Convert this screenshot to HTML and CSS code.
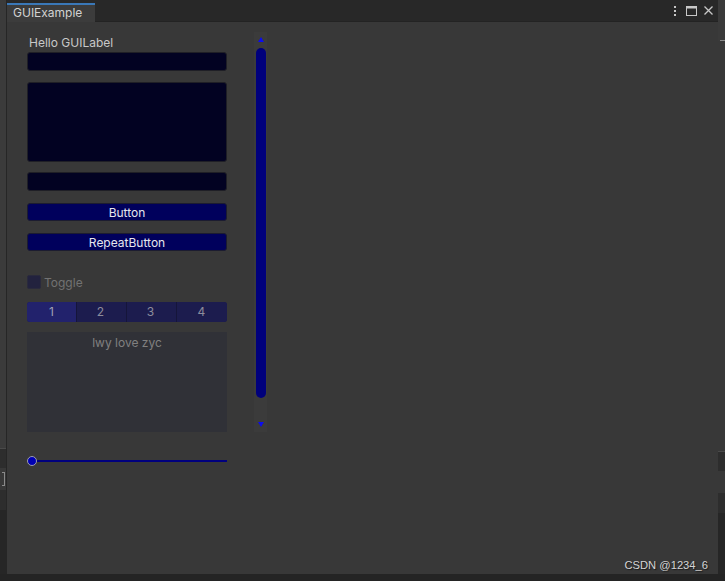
FILE: index.html
```html
<!DOCTYPE html>
<html>
<head>
<meta charset="utf-8">
<link rel="stylesheet" href="styles.css">
</head>
<body>
<div class="screen">
  <div class="side side-left">
    <div class="s-a"></div>
    <div class="s-b"></div>
    <div class="s-c"><span class="br"></span></div>
    <div class="s-b2"></div>
    <div class="s-d"></div>
  </div>
  <div class="window">
    <div class="tabbar">
      <div class="tab">GUIExample</div>
      <div class="tab-icons">
        <svg class="ic" width="6" height="12" viewBox="0 0 6 12"><rect x="2" y="1" width="2" height="2" fill="#c8c8c8"/><rect x="2" y="5" width="2" height="2" fill="#c8c8c8"/><rect x="2" y="9" width="2" height="2" fill="#c8c8c8"/></svg>
        <svg class="ic max" width="11" height="10" viewBox="0 0 11 10"><rect x="0.5" y="0.5" width="10" height="9" fill="none" stroke="#c8c8c8"/><rect x="0.5" y="0.5" width="10" height="2" fill="#c8c8c8"/></svg>
        <svg class="ic" width="9" height="9" viewBox="0 0 9 9"><path d="M0.5 0.5L8.5 8.5M8.5 0.5L0.5 8.5" stroke="#c8c8c8" stroke-width="1.3"/></svg>
      </div>
    </div>
    <div class="content">
      <div class="col">
        <div class="label">Hello GUILabel</div>
        <div class="field"></div>
        <div class="field area"></div>
        <div class="field pass"></div>
        <div class="btn">Button</div>
        <div class="btn rep">RepeatButton</div>
        <div class="toggle"><span class="check"></span><span class="tlabel">Toggle</span></div>
        <div class="toolbar">
          <div class="seg on">1</div>
          <div class="seg">2</div>
          <div class="seg">3</div>
          <div class="seg last">4</div>
        </div>
        <div class="box">lwy love zyc</div>
        <div class="slider"><span class="thumb"></span><span class="track"></span></div>
      </div>
      <div class="vscroll">
        <span class="arrow up"></span>
        <span class="vthumb"></span>
        <span class="arrow down"></span>
      </div>
      <div class="mark">CSDN @1234_6</div>
    </div>
  </div>
  <div class="side side-right">
    <div class="r-a"></div>
    <div class="r-line"></div>
    <div class="r-a2"></div>
    <div class="s-b"></div>
    <div class="s-c"></div>
    <div class="s-b2"></div>
    <div class="s-d"></div>
  </div>
</div>
</body>
</html>
```
FILE: styles.css
```css
html, body {
  margin: 0;
  padding: 0;
}
body {
  width: 725px;
  height: 581px;
  overflow: hidden;
  background: #242424;
  font-family: Inter, "Noto Sans", sans-serif;
  font-size: 12px;
}
.screen {
  display: flex;
  height: 574px;
}
.side {
  width: 6px;
  display: flex;
  flex-direction: column;
  background: #3a3a3a;
}
.side-left {
  border-right: 1px solid #262626;
}
.side-right {
  width: 7px;
}
.s-a { height: 448px; background: #3b3b3b; }
.s-b { height: 20px; background: #2d2d2d; border-top: 1px solid #4a4a4a; box-sizing: border-box; }
.s-c { height: 22px; background: #383838; display: flex; align-items: center; }
.br {
  display: block;
  width: 2px;
  height: 12px;
  margin-left: 2px;
  border: 1px solid #8a8a8a;
  border-left: 0;
}
.s-b2 { height: 20px; background: #2d2d2d; }
.s-d { flex: 1; background: #262626; }
.r-a { height: 40px; background: #3a3a3a; }
.r-line { height: 1px; background: #8a8a8a; margin-left: 2px; }
.r-a2 { height: 410px; background: #383838; }

.window {
  width: 711px;
  display: flex;
  flex-direction: column;
}
.tabbar {
  height: 22px;
  background: #282828;
  display: flex;
  align-items: flex-end;
  border-bottom: 1px solid #232323;
  box-sizing: border-box;
}
.tab {
  width: 88px;
  height: 19px;
  margin-bottom: -1px;
  box-sizing: border-box;
  border-top: 2px solid #3a78b8;
  background: #3c3c3c;
  color: #d2d2d2;
  padding-left: 6px;
  line-height: 16px;
  font-size: 12px;
}
.tab-icons {
  margin-left: auto;
  align-self: stretch;
  display: flex;
  align-items: center;
  padding-right: 5px;
}
.ic { display: block; }
.max { margin: 0 7px 0 8px; }

.content {
  flex: 1;
  background: #383838;
  display: flex;
  align-items: flex-start;
  padding: 10px 0 0 20px;
  position: relative;
}
.col {
  width: 200px;
  display: flex;
  flex-direction: column;
  padding-top: 2px;
}
.label {
  height: 18px;
  line-height: 18px;
  color: #c8c8c8;
  padding-left: 2px;
}
.field {
  height: 19px;
  box-sizing: border-box;
  background: #020222;
  border: 1px solid #1f1f26;
  border-radius: 3px;
}
.area {
  height: 80px;
  margin-top: 11px;
}
.pass {
  margin-top: 10px;
}
.btn {
  height: 18px;
  margin-top: 12px;
  box-sizing: border-box;
  background: #00005c;
  border: 1px solid #1c1c30;
  border-radius: 3px;
  color: #e6e6ee;
  text-align: center;
  line-height: 18px;
}
.toggle {
  margin-top: 24px;
  display: flex;
  align-items: flex-start;
  height: 14px;
}
.check {
  width: 14px;
  height: 14px;
  box-sizing: border-box;
  background: #22223e;
  border: 1px solid #2a2a3c;
  border-radius: 2px;
}
.tlabel {
  margin-left: 3px;
  color: #727272;
  font-size: 12px;
  line-height: 16px;
}
.toolbar {
  margin-top: 13px;
  height: 20px;
  display: flex;
  border-radius: 3px;
  overflow: hidden;
  background: #1c1c4e;
}
.seg {
  flex: none;
  width: 50px;
  box-sizing: border-box;
  text-align: center;
  line-height: 20px;
  color: #8c8c9c;
  background: #1c1c4e;
  border-left: 1px solid #15153a;
  padding-right: 2px;
}
.seg.on {
  width: 49px;
  border-left: 0;
  padding-right: 0;
  background: #22226c;
  color: #a0a0b4;
}
.seg.last { width: 51px; padding-right: 1px; }
.box {
  margin-top: 10px;
  height: 100px;
  background: #303137;
  color: #808080;
  text-align: center;
  line-height: 22px;
}
.slider {
  margin-top: 24px;
  height: 10px;
  display: flex;
  align-items: center;
  position: relative;
}
.thumb {
  width: 10px;
  height: 10px;
  box-sizing: border-box;
  border-radius: 50%;
  background: #0000b4;
  border: 1px solid #9c9cae;
  position: relative;
  z-index: 1;
}
.track {
  flex: 1;
  height: 2px;
  background: #00007e;
  margin-left: -1px;
}
.vscroll {
  margin-left: 27px;
  width: 13px;
  height: 400px;
  background: #3b3b3b;
  display: flex;
  flex-direction: column;
  align-items: center;
  padding-top: 5px;
  box-sizing: border-box;
}
.arrow {
  width: 0;
  height: 0;
  border-left: 3.5px solid transparent;
  border-right: 3.5px solid transparent;
}
.arrow.up { border-bottom: 5px solid #0c0cf0; }
.arrow.down { border-top: 5px solid #0c0cf0; margin-top: 24px; }
.vthumb {
  width: 10px;
  height: 350px;
  margin-top: 6px;
  border-radius: 5px;
  background: #00007c;
}
.mark {
  position: absolute;
  right: 10px;
  bottom: 3px;
  font-family: "Liberation Sans", Arial, sans-serif;
  font-size: 11.2px;
  color: #d4d4d4;
  text-shadow: 1px 1px 1px #1a1a1a;
}
```
